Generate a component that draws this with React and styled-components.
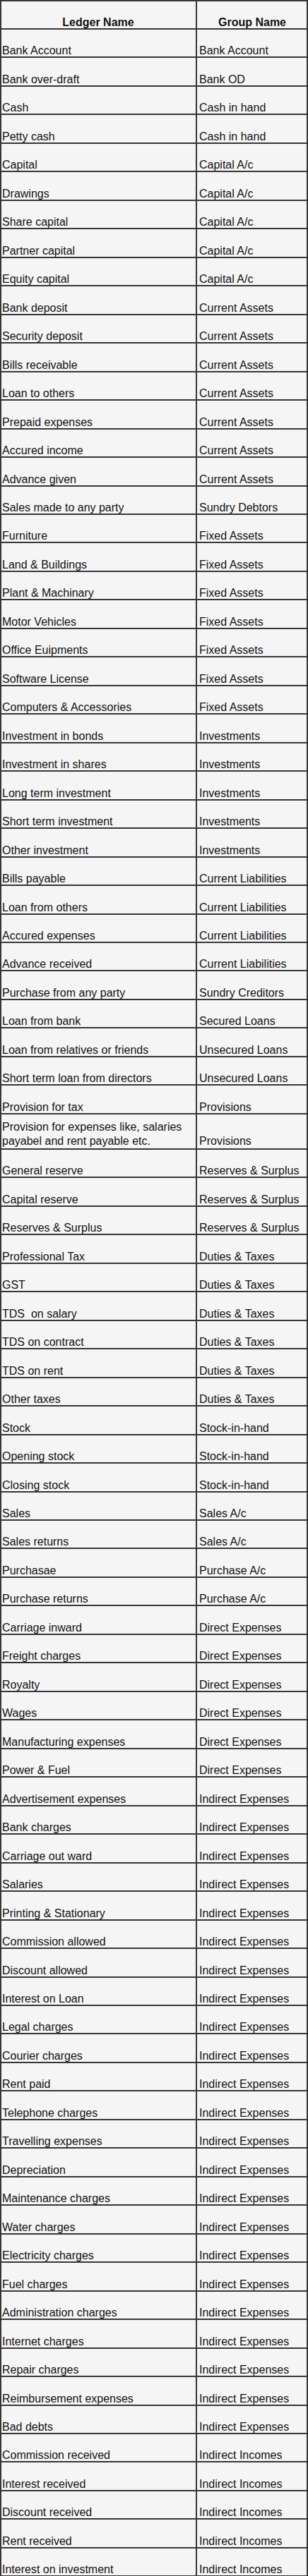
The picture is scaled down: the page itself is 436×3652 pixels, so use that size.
import React from 'react';
import styled, { createGlobalStyle } from 'styled-components';

const ledgers = [
  ['Bank Account', 'Bank Account'],
  ['Bank over-draft', 'Bank OD'],
  ['Cash', 'Cash in hand'],
  ['Petty cash', 'Cash in hand'],
  ['Capital', 'Capital A/c'],
  ['Drawings', 'Capital A/c'],
  ['Share capital', 'Capital A/c'],
  ['Partner capital', 'Capital A/c'],
  ['Equity capital', 'Capital A/c'],
  ['Bank deposit', 'Current Assets'],
  ['Security deposit', 'Current Assets'],
  ['Bills receivable', 'Current Assets'],
  ['Loan to others', 'Current Assets'],
  ['Prepaid expenses', 'Current Assets'],
  ['Accured income', 'Current Assets'],
  ['Advance given', 'Current Assets'],
  ['Sales made to any party', 'Sundry Debtors'],
  ['Furniture', 'Fixed Assets'],
  ['Land & Buildings', 'Fixed Assets'],
  ['Plant & Machinary', 'Fixed Assets'],
  ['Motor Vehicles', 'Fixed Assets'],
  ['Office Euipments', 'Fixed Assets'],
  ['Software License', 'Fixed Assets'],
  ['Computers & Accessories', 'Fixed Assets'],
  ['Investment in bonds', 'Investments'],
  ['Investment in shares', 'Investments'],
  ['Long term investment', 'Investments'],
  ['Short term investment', 'Investments'],
  ['Other investment', 'Investments'],
  ['Bills payable', 'Current Liabilities'],
  ['Loan from others', 'Current Liabilities'],
  ['Accured expenses', 'Current Liabilities'],
  ['Advance received', 'Current Liabilities'],
  ['Purchase from any party', 'Sundry Creditors'],
  ['Loan from bank', 'Secured Loans'],
  ['Loan from relatives or friends', 'Unsecured Loans'],
  ['Short term loan from directors', 'Unsecured Loans'],
  ['Provision for tax', 'Provisions'],
  ['Provision for expenses like, salaries payabel and rent payable etc.', 'Provisions', true],
  ['General reserve', 'Reserves & Surplus'],
  ['Capital reserve', 'Reserves & Surplus'],
  ['Reserves & Surplus', 'Reserves & Surplus'],
  ['Professional Tax', 'Duties & Taxes'],
  ['GST', 'Duties & Taxes'],
  ['TDS\u00a0 on salary', 'Duties & Taxes'],
  ['TDS on contract', 'Duties & Taxes'],
  ['TDS on rent', 'Duties & Taxes'],
  ['Other taxes', 'Duties & Taxes'],
  ['Stock', 'Stock-in-hand'],
  ['Opening stock', 'Stock-in-hand'],
  ['Closing stock', 'Stock-in-hand'],
  ['Sales', 'Sales A/c'],
  ['Sales returns', 'Sales A/c'],
  ['Purchasae', 'Purchase A/c'],
  ['Purchase returns', 'Purchase A/c'],
  ['Carriage inward', 'Direct Expenses'],
  ['Freight charges', 'Direct Expenses'],
  ['Royalty', 'Direct Expenses'],
  ['Wages', 'Direct Expenses'],
  ['Manufacturing expenses', 'Direct Expenses'],
  ['Power & Fuel', 'Direct Expenses'],
  ['Advertisement expenses', 'Indirect Expenses'],
  ['Bank charges', 'Indirect Expenses'],
  ['Carriage out ward', 'Indirect Expenses'],
  ['Salaries', 'Indirect Expenses'],
  ['Printing & Stationary', 'Indirect Expenses'],
  ['Commission allowed', 'Indirect Expenses'],
  ['Discount allowed', 'Indirect Expenses'],
  ['Interest on Loan', 'Indirect Expenses'],
  ['Legal charges', 'Indirect Expenses'],
  ['Courier charges', 'Indirect Expenses'],
  ['Rent paid', 'Indirect Expenses'],
  ['Telephone charges', 'Indirect Expenses'],
  ['Travelling expenses', 'Indirect Expenses'],
  ['Depreciation', 'Indirect Expenses'],
  ['Maintenance charges', 'Indirect Expenses'],
  ['Water charges', 'Indirect Expenses'],
  ['Electricity charges', 'Indirect Expenses'],
  ['Fuel charges', 'Indirect Expenses'],
  ['Administration charges', 'Indirect Expenses'],
  ['Internet charges', 'Indirect Expenses'],
  ['Repair charges', 'Indirect Expenses'],
  ['Reimbursement expenses', 'Indirect Expenses'],
  ['Bad debts', 'Indirect Expenses'],
  ['Commission received', 'Indirect Incomes'],
  ['Interest received', 'Indirect Incomes'],
  ['Discount received', 'Indirect Incomes'],
  ['Rent received', 'Indirect Incomes'],
  ['Interest on investment', 'Indirect Incomes'],
];

const GlobalStyle = createGlobalStyle`
  html, body {
    margin: 0;
    padding: 0;
    background: #f5f5f5;
  }
  body {
    font-family: "Liberation Sans", Arial, sans-serif;
    color: #111;
  }
`;

const Sheet = styled.div`
  width: 436px;
  box-sizing: border-box;
  border: 2px solid #363636;
  border-bottom: none;
  background: #f5f5f5;
`;

const Row = styled.div`
  display: grid;
  grid-template-columns: 277px 1fr;
  height: ${(p) => p.$height}px;
  box-sizing: border-box;
  border-bottom: 2px solid #363636;
`;

// spreadsheet style: text sits on the bottom edge of the cell
const Cell = styled.div`
  display: flex;
  align-items: flex-end;
  justify-content: ${(p) => (p.$head ? 'center' : 'flex-start')};
  box-sizing: border-box;
  padding: 0 2px 0 ${(p) => (p.$group ? 3 : 1)}px;
  border-right: ${(p) => (p.$group ? 'none' : '2px solid #363636')};
  font-size: 16px;
  line-height: ${(p) => (p.$wrap ? 20 : 17)}px;
  font-weight: ${(p) => (p.$head ? 700 : 400)};
  white-space: ${(p) => (p.$wrap ? 'normal' : 'nowrap')};
  overflow: hidden;
`;

export default function App() {
  return (
    <>
      <GlobalStyle />
      <Sheet>
        <Row $height={40}>
          <Cell $head>Ledger Name</Cell>
          <Cell $head $group>Group Name</Cell>
        </Row>
        {ledgers.map(([ledger, group, tall], i) => (
          <Row key={i} $height={tall ? 50.1 : 40.47}>
            <Cell $wrap={tall}>{ledger}</Cell>
            <Cell $group $wrap={tall}>{group}</Cell>
          </Row>
        ))}
      </Sheet>
    </>
  );
}
